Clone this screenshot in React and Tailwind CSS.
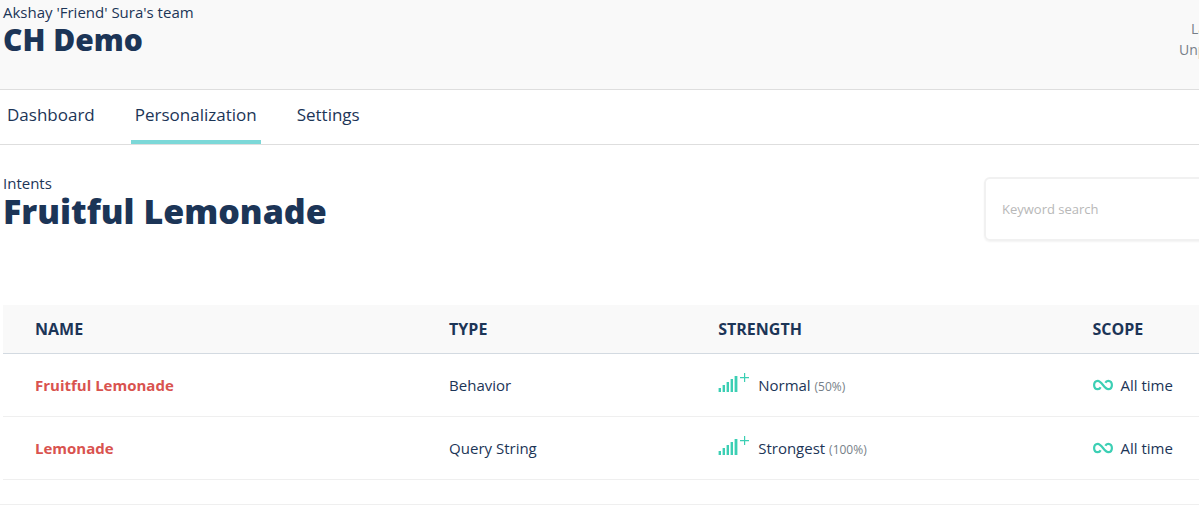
import React from 'react'

const tabs = [
  { label: 'Dashboard', active: false },
  { label: 'Personalization', active: true },
  { label: 'Settings', active: false },
]

const intents = [
  { name: 'Fruitful Lemonade', type: 'Behavior', strength: 'Normal', percent: '50%', scope: 'All time' },
  { name: 'Lemonade', type: 'Query String', strength: 'Strongest', percent: '100%', scope: 'All time' },
]

function StrengthIcon() {
  return (
    <svg className="w-8 h-5 shrink-0" viewBox="0 0 32 20" fill="#3ccfb4" aria-hidden="true">
      <g opacity="0.4">
        <path d="M0 15h3v4H0zM4 12h3v7H4zM8 9h3v10H8zM12 6h3v13h-3zM16 3h4v16h-4z" />
      </g>
      <path d="M1 15h2v4H1zM5 12h2v7H5zM9 9h2v10H9zM13 6h2v13h-2zM17 3h2v16h-2z" />
      <path d="M22 4h9v1.2h-9zM26 0h1.2v9H26z" />
    </svg>
  )
}

function InfinityIcon() {
  return (
    <svg className="w-5 h-4 shrink-0" viewBox="0 0 20 16" fill="none" stroke="#3ccfb4" strokeWidth="2.2" aria-hidden="true">
      <path d="M7.6 10.2C7 11.6 6 12.2 4.8 12.2C2.4 12.2 1.1 10.5 1.1 8S2.4 3.8 4.8 3.8C8.6 3.8 11.4 12.2 15.2 12.2C17.6 12.2 18.9 10.5 18.9 8S17.6 3.8 15.2 3.8C14 3.8 13 4.4 12.4 5.8" />
    </svg>
  )
}

function IntentsTable() {
  return (
    <table className="w-full table-fixed border-collapse text-left text-[15px] leading-6">
      <colgroup>
        <col className="w-[37.3%]" />
        <col className="w-[22.5%]" />
        <col className="w-[31.3%]" />
        <col />
      </colgroup>
      <thead className="bg-[#f9f9f9] text-base uppercase">
        <tr className="h-12 border-b border-[#d3dae1]">
          <th className="pl-8 font-bold">Name</th>
          <th className="font-bold">Type</th>
          <th className="font-bold">Strength</th>
          <th className="font-bold">Scope</th>
        </tr>
      </thead>
      <tbody>
        {intents.map((intent) => (
          <tr key={intent.name} className="h-[63px] border-b border-[#efefef]">
            <td className="pl-8">
              <a href="#" className="font-bold text-[#d9534f]">{intent.name}</a>
            </td>
            <td>{intent.type}</td>
            <td>
              <div className="flex items-center">
                <span className="pb-1">
                  <StrengthIcon />
                </span>
                <span className="pl-2">
                  {intent.strength} <span className="text-xs text-[#777f88]">({intent.percent})</span>
                </span>
              </div>
            </td>
            <td>
              <div className="flex items-center gap-2 whitespace-nowrap">
                <InfinityIcon />
                {intent.scope}
              </div>
            </td>
          </tr>
        ))}
      </tbody>
    </table>
  )
}

function App() {
  return (
    <div className="overflow-hidden bg-white font-['Open_Sans','Noto_Sans',sans-serif] text-[#1c3557]">
      <header className="flex justify-between border-b border-[#dedede] bg-[#f9f9f9] pb-[29px] pl-[3px]">
        <div>
          <p className="pt-0.5 text-[15px] leading-5">Akshay 'Friend' Sura's team</p>
          <h1 className="text-[30px] leading-9 font-extrabold">CH Demo</h1>
        </div>
        <div className="w-5 overflow-hidden pt-[18px] text-sm leading-[21px] text-[#777f88]">
          <p className="pl-3">La</p>
          <p>Unp</p>
        </div>
      </header>

      <nav className="flex h-[55px] gap-8 border-b border-[#dedede] pl-[3px] text-[17px]">
        {tabs.map((tab) => (
          <a
            key={tab.label}
            href="#"
            className={`flex items-center border-b-4 px-1 ${tab.active ? 'border-[#7cd8d8]' : 'border-transparent'}`}
          >
            {tab.label}
          </a>
        ))}
      </nav>

      <main className="pl-[3px]">
        <div className="flex items-start justify-between pt-7">
          <div>
            <p className="text-[15px] leading-5">Intents</p>
            <h2 className="text-[34px] leading-9 font-extrabold">Fruitful Lemonade</h2>
          </div>
          <input
            type="text"
            aria-label="Keyword search"
            placeholder="Keyword search"
            className="mt-1 -mr-4 h-16 w-[231px] rounded-md border-2 border-[#f1f1f1] px-4 text-[13px] shadow-xs placeholder:text-[#b8b8b8]"
          />
        </div>
        <div className="pt-16">
          <IntentsTable />
        </div>
      </main>

      <div className="mt-6 border-t border-[#efefef]" />
    </div>
  )
}

export default App
